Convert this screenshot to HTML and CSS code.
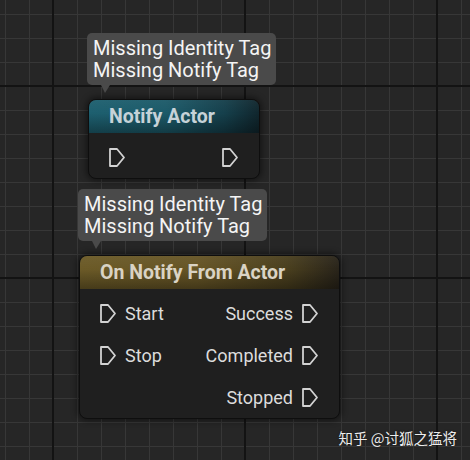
FILE: index.html
```html
<!DOCTYPE html>
<html lang="zh">
<head>
<meta charset="utf-8">
<title>Blueprint nodes</title>
<link rel="stylesheet" href="styles.css">
</head>
<body>
<div class="canvas">
  <div class="group group-a">
    <div class="tooltip">Missing Identity Tag<br>Missing Notify Tag</div>
    <div class="node node-a">
      <div class="header header-teal">Notify Actor</div>
      <div class="body-simple">
        <svg class="pin" viewBox="0 0 18 21"><path d="M2 2 H9 L16 10.5 L9 19 H2 Z"/></svg>
        <svg class="pin" viewBox="0 0 18 21"><path d="M2 2 H9 L16 10.5 L9 19 H2 Z"/></svg>
      </div>
    </div>
  </div>

  <div class="group group-b">
    <div class="tooltip">Missing Identity Tag<br>Missing Notify Tag</div>
    <div class="node node-b">
      <div class="header header-olive">On Notify From Actor</div>
      <div class="body-pins">
        <div class="col col-in">
          <div class="row"><svg class="pin" viewBox="0 0 18 21"><path d="M2 2 H9 L16 10.5 L9 19 H2 Z"/></svg><span>Start</span></div>
          <div class="row"><svg class="pin" viewBox="0 0 18 21"><path d="M2 2 H9 L16 10.5 L9 19 H2 Z"/></svg><span>Stop</span></div>
        </div>
        <div class="col col-out">
          <div class="row"><span>Success</span><svg class="pin" viewBox="0 0 18 21"><path d="M2 2 H9 L16 10.5 L9 19 H2 Z"/></svg></div>
          <div class="row"><span>Completed</span><svg class="pin" viewBox="0 0 18 21"><path d="M2 2 H9 L16 10.5 L9 19 H2 Z"/></svg></div>
          <div class="row"><span>Stopped</span><svg class="pin" viewBox="0 0 18 21"><path d="M2 2 H9 L16 10.5 L9 19 H2 Z"/></svg></div>
        </div>
      </div>
    </div>
  </div>

  <div class="watermark">知乎 @讨狐之猛将</div>
</div>
</body>
</html>
```

FILE: styles.css
```css
html, body {
  margin: 0;
  padding: 0;
}

body {
  width: 470px;
  height: 460px;
  overflow: hidden;
  font-family: Roboto, "Liberation Sans", sans-serif;
}

.canvas {
  position: relative;
  width: 470px;
  height: 460px;
  background-color: #262626;
  background-image:
    linear-gradient(to right, #131313 2px, transparent 2px),
    linear-gradient(to bottom, #131313 2px, transparent 2px),
    linear-gradient(to right, #373737 1px, transparent 1px),
    linear-gradient(to bottom, #373737 1px, transparent 1px);
  background-size: 192px 460px, 470px 192px, 24px 24px, 24px 24px;
  background-position: 52px 0, 0 85px, 5px 0, 0 14px;
  background-repeat: repeat-x, repeat-y, repeat, repeat;
}

.group {
  position: absolute;
  display: flex;
  flex-direction: column;
  align-items: flex-start;
  gap: 14px;
}

.group-a { left: 87px; top: 33px; }
.group-b { left: 78px; top: 189px; }

.tooltip {
  position: relative;
  background: #4a4a4a;
  color: #f4f4f4;
  font-size: 20px;
  line-height: 22px;
  padding: 4px 5px 4px 6px;
  border-radius: 5px;
  white-space: nowrap;
}

.tooltip::after {
  content: "";
  position: absolute;
  left: 14px;
  top: 100%;
  border-left: 4px solid transparent;
  border-right: 5px solid transparent;
  border-top: 8px solid #4a4a4a;
}

.node {
  margin-left: 1px;
  background: #1f1f1f;
  border: 1px solid #0e0e0e;
  border-radius: 8px;
  overflow: hidden;
  box-shadow: 0 0 6px 2px rgba(0, 0, 0, 0.45);
}

.node-a { width: 170px; }
.node-b { width: 259px; }

.header {
  height: 33px;
  display: flex;
  align-items: center;
  padding-left: 20px;
  font-weight: 700;
  font-size: 19.5px;
  white-space: nowrap;
}

.header-teal {
  color: #c6d2d8;
  background:
    linear-gradient(to bottom, rgba(255, 255, 255, 0.04) 0%, rgba(0, 0, 0, 0) 40%, rgba(0, 0, 0, 0.35) 100%),
    linear-gradient(to right, #1d5f6f 0%, #1c5a69 45%, #153f4b 80%, #10262d 100%);
}

.header-olive {
  color: #d9d3c4;
  background:
    linear-gradient(to bottom, rgba(255, 255, 255, 0.04) 0%, rgba(0, 0, 0, 0) 40%, rgba(0, 0, 0, 0.35) 100%),
    linear-gradient(to right, #6b5a27 0%, #665526 45%, #4a3f1e 80%, #29241a 100%);
}

.pin {
  width: 18px;
  height: 21px;
  flex: none;
  fill: none;
  stroke: #d2d2d2;
  stroke-width: 1.8;
  stroke-linejoin: round;
}

.body-simple {
  height: 45px;
  padding: 3px 20px 0 19px;
  box-sizing: border-box;
  display: flex;
  align-items: center;
  justify-content: space-between;
}

.body-pins {
  display: flex;
  justify-content: space-between;
  padding: 3px 20px 0 19px;
}

.col {
  display: flex;
  flex-direction: column;
}

.col-out { align-items: flex-end; }

.row {
  height: 42px;
  display: flex;
  align-items: center;
  gap: 8px;
  color: #dcdcdc;
  font-size: 18px;
}

.watermark {
  position: absolute;
  right: 13px;
  top: 428px;
  font-family: "Noto Sans CJK SC", sans-serif;
  font-size: 14.5px;
  line-height: 20px;
  color: #ececec;
  text-shadow: 0 0 2px rgba(0, 0, 0, 0.6);
  white-space: nowrap;
}
```
